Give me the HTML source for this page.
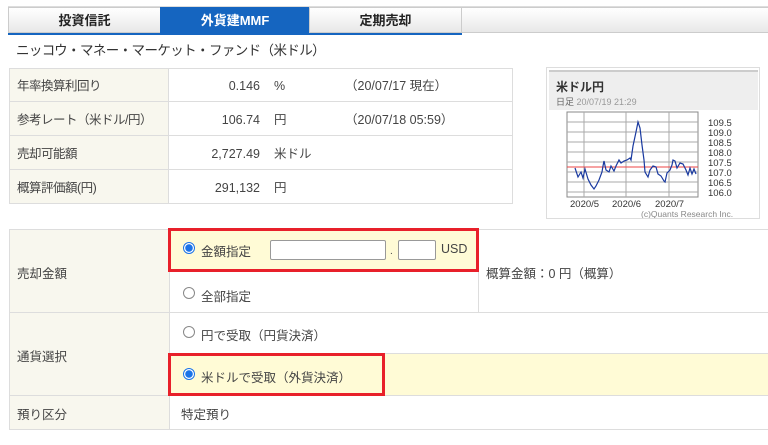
<!DOCTYPE html>
<html><head><meta charset="utf-8"><style>
body{margin:0;width:768px;height:445px;background:#fff;font-family:"Liberation Sans","Noto Sans CJK JP",sans-serif;color:#444;font-size:12.5px;position:relative;overflow:hidden}
.a{position:absolute}
.tab{position:absolute;top:7px;height:26px;line-height:26px;text-align:center;font-weight:bold;font-size:13px;color:#222;background:linear-gradient(#fff,#e8e8e8);border:1px solid #ccc;box-sizing:border-box}
.cell{position:absolute;box-sizing:border-box;border:1px solid #ddd}
.lab{background:#f8f7ee}
.rad{position:absolute;width:12px;height:12px;border-radius:50%;box-sizing:border-box}
.off{border:1px solid #888;background:#fff}
.on{background:radial-gradient(circle,#1a73e8 0 3.5px,#fff 4px);border:1.5px solid #1a73e8}
</style></head><body>
<div class="a" style="left:8px;top:6px;width:760px;height:1px;background:#ddd"></div>
<div class="tab" style="left:8px;width:153px">投資信託</div>
<div class="tab" style="left:160px;width:150px;background:#1565c0;color:#fff;border-color:#1565c0">外貨建MMF</div>
<div class="tab" style="left:309px;width:153px">定期売却</div>
<div class="tab" style="left:461px;width:307px;border-right:none"></div>
<div class="a" style="left:8px;top:33px;width:454px;height:2px;background:#1565c0"></div>
<div class="a" style="left:16px;top:39px;font-size:13.5px;color:#333;letter-spacing:-0.6px">ニッコウ・マネー・マーケット・ファンド（米ドル）</div>

<!-- table1 -->
<div class="cell lab" style="left:9px;top:68px;width:160px;height:136px"></div>
<div class="cell" style="left:168px;top:68px;width:345px;height:136px"></div>
<div class="a" style="left:9px;top:101px;width:504px;height:1px;background:#ddd"></div>
<div class="a" style="left:9px;top:135px;width:504px;height:1px;background:#ddd"></div>
<div class="a" style="left:9px;top:169px;width:504px;height:1px;background:#ddd"></div>
<div class="a" style="left:17px;top:69px;line-height:34px;letter-spacing:-0.5px">年率換算利回り<br>参考レート（米ドル/円）<br>売却可能額<br>概算評価額(円)</div>
<div class="a" style="left:180px;width:80px;text-align:right;top:69px;line-height:34px">0.146<br>106.74<br>2,727.49<br>291,132</div>
<div class="a" style="left:274px;top:69px;line-height:34px">%<br>円<br>米ドル<br>円</div>
<div class="a" style="left:345px;top:69px;line-height:34px">（20/07/17 現在）<br>（20/07/18 05:59）</div>

<!-- chart -->
<div class="a" style="left:546px;top:67px;width:214px;height:152px;border:1px solid #ddd;box-sizing:border-box"></div>
<div class="a" style="left:549px;top:70px;width:209px;height:40px;background:#eee;border-top:2px solid #ccc;box-sizing:border-box"></div>
<div class="a" style="left:556px;top:78px;font-size:12px;font-weight:bold;color:#333">米ドル円</div>
<div class="a" style="left:556px;top:95px;font-size:9px;color:#666">日足 <span style="color:#999">20/07/19 21:29</span></div>
<svg class="a" style="left:546px;top:108px" width="214" height="110" viewBox="546 108 214 110">
<rect x="567" y="112" width="131" height="85" fill="#fff" stroke="#888"/>
<g stroke="#aaa" stroke-width="1"><line x1="584" y1="112" x2="584" y2="197"/><line x1="626" y1="112" x2="626" y2="197"/><line x1="669" y1="112" x2="669" y2="197"/>
<line x1="567" y1="122" x2="698" y2="122"/><line x1="567" y1="132" x2="698" y2="132"/><line x1="567" y1="142" x2="698" y2="142"/><line x1="567" y1="152" x2="698" y2="152"/><line x1="567" y1="162" x2="698" y2="162"/><line x1="567" y1="172" x2="698" y2="172"/><line x1="567" y1="182" x2="698" y2="182"/><line x1="567" y1="192" x2="698" y2="192"/></g>
<line x1="567" y1="167" x2="698" y2="167" stroke="#e44"/>
<polyline fill="none" stroke="#1a3aa0" stroke-width="1.2" points="575,168 578,177 581,172 583,178 585,169 588,179 591,185 594,189 596,186 599,180 602,172 603,166 604,161 606,170 609,172 611,166 614,171 616,166 619,160 621,163 624,161 627,160 630,158 631,160 633,146 636,132 638,122 640,128 642,145 644,160 645,172 648,177 650,170 653,166 656,167 658,174 661,176 664,181 665,182 667,173 670,170 672,165 673,160 675,161 677,168 680,163 683,164 686,170 688,175 690,168 692,174 694,169 696,174"/>
<g font-size="9.5" fill="#333" font-family="Liberation Sans,sans-serif"><text x="708" y="126">109.5</text><text x="708" y="136">109.0</text><text x="708" y="146">108.5</text><text x="708" y="156">108.0</text><text x="708" y="166">107.5</text><text x="708" y="176">107.0</text><text x="708" y="186">106.5</text><text x="708" y="196">106.0</text>
<text x="570" y="207">2020/5</text><text x="612" y="207">2020/6</text><text x="655" y="207">2020/7</text></g>
<text x="641" y="217" font-size="8.5" fill="#888" font-family="Liberation Sans,sans-serif">(c)Quants Research Inc.</text>
</svg>

<!-- table2 -->
<div class="cell lab" style="left:9px;top:229px;width:161px;height:201px"></div>
<div class="cell" style="left:169px;top:229px;width:600px;height:201px"></div>
<div class="a" style="left:170px;top:231px;width:307px;height:39px;background:#fffbd6"></div>
<div class="a" style="left:170px;top:354px;width:598px;height:41px;background:#fffbd6"></div>
<div class="a" style="left:478px;top:229px;width:1px;height:83px;background:#ddd"></div>
<div class="a" style="left:9px;top:312px;width:760px;height:1px;background:#ddd"></div>
<div class="a" style="left:9px;top:395px;width:760px;height:1px;background:#ddd"></div>
<div class="a" style="left:170px;top:353px;width:598px;height:1px;background:#ddd"></div>
<div class="a" style="left:17px;top:263px">売却金額</div>
<div class="a" style="left:17px;top:346px">通貨選択</div>
<div class="a" style="left:17px;top:404px">預り区分</div>
<div class="rad on" style="left:183px;top:242px"></div>
<div class="a" style="left:201px;top:241px">金額指定</div>
<div class="a" style="left:270px;top:240px;width:116px;height:20px;border:1px solid #999;border-radius:2px;background:#fff;box-sizing:border-box"></div>
<div class="a" style="left:390px;top:246px;font-size:10px">.</div>
<div class="a" style="left:398px;top:240px;width:38px;height:20px;border:1px solid #999;border-radius:2px;background:#fff;box-sizing:border-box"></div>
<div class="a" style="left:441px;top:242px">USD</div>
<div class="rad off" style="left:183px;top:287px"></div>
<div class="a" style="left:201px;top:286px">全部指定</div>
<div class="a" style="left:486px;top:263px">概算金額：0 円（概算）</div>
<div class="rad off" style="left:183px;top:326px"></div>
<div class="a" style="left:201px;top:325px">円で受取（円貨決済）</div>
<div class="rad on" style="left:183px;top:368px"></div>
<div class="a" style="left:201px;top:367px">米ドルで受取（外貨決済）</div>
<div class="a" style="left:181px;top:404px">特定預り</div>
<div class="a" style="left:168px;top:228px;width:311px;height:44px;border:3px solid #e8202a;box-sizing:border-box"></div>
<div class="a" style="left:168px;top:353px;width:217px;height:43px;border:3px solid #e8202a;box-sizing:border-box"></div>
</body></html>
